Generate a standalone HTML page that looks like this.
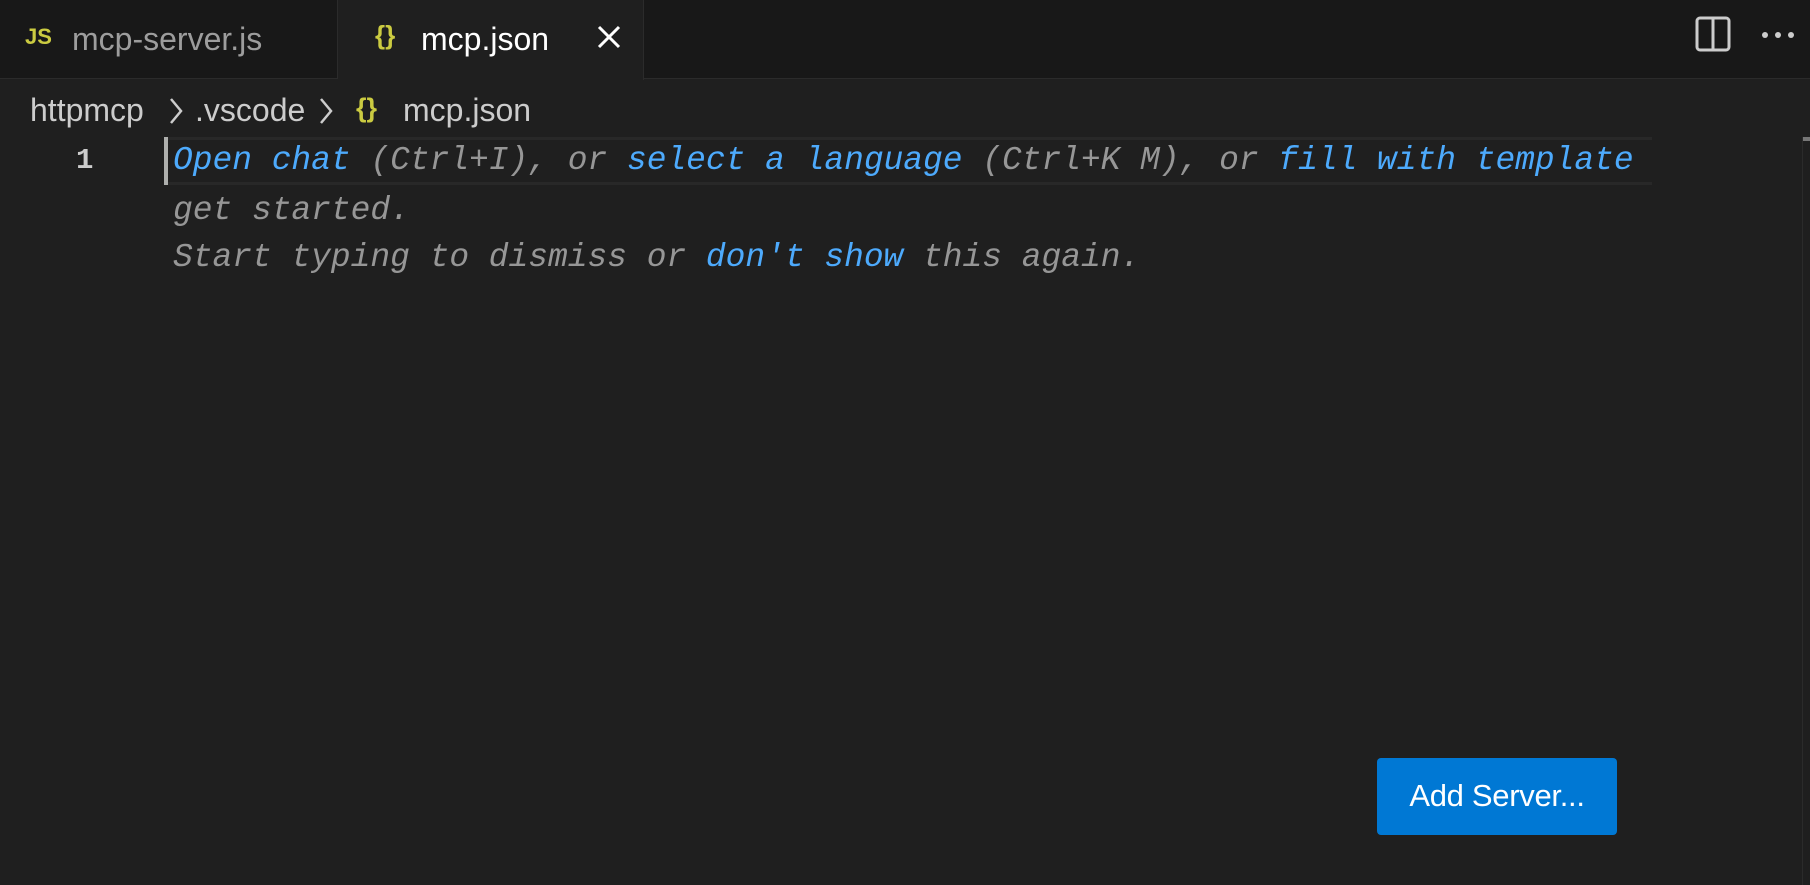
<!DOCTYPE html>
<html><head><meta charset="utf-8"><style>
*{margin:0;padding:0;box-sizing:border-box}
body{width:1810px;height:885px;background:#1f1f1f;overflow:hidden;font-family:"Liberation Sans",sans-serif;position:relative}
.tabbar{position:absolute;left:0;top:0;width:1810px;height:79px;background:#181818;border-bottom:1px solid #2b2b2b}
.tab{position:absolute;top:0;height:79px;font-size:32px;line-height:78px}
.crumb{position:absolute;top:88px;font-size:32px;color:#cccccc;line-height:44px;white-space:nowrap}
.code{position:absolute;left:173px;font-family:"Liberation Mono",monospace;font-style:italic;font-size:32.9px;color:#969696;white-space:pre;line-height:48px}
.b{color:#4daafc}
.hl{position:absolute;left:164px;top:137px;width:1488px;height:48px;border-top:3px solid #282828;border-bottom:3px solid #282828}
.btn{position:absolute;left:1377px;top:758px;width:240px;height:77px;background:#0078d4;border-radius:4px;color:#fff;font-size:31px;text-align:center;line-height:76px;letter-spacing:-0.3px}
</style></head><body>
<div class="tabbar">
 <div class="tab" style="left:0;width:338px;color:#9d9d9d;border-right:1px solid #2b2b2b"><span style="position:absolute;left:25px;top:-2px;font-size:22px;font-weight:bold;color:#cbcb41">JS</span><span style="position:absolute;left:72px">mcp-server.js</span></div>
 <div class="tab" style="left:338px;width:306px;height:80px;background:#1f1f1f;color:#fff;border-right:1px solid #2b2b2b"><span style="position:absolute;left:37px;font-size:26px;font-weight:bold;color:#cbcb41;top:-4px">{}</span><span style="position:absolute;left:83px">mcp.json</span>
 <svg style="position:absolute;left:259px;top:25px" width="24" height="24" viewBox="0 0 24 24"><path d="M2 2L22 22M22 2L2 22" stroke="#fff" stroke-width="3"/></svg></div>
 <svg style="position:absolute;left:1695px;top:16px" width="36" height="36" viewBox="0 0 36 36"><rect x="2" y="2" width="32" height="32" rx="3" fill="none" stroke="#ccc" stroke-width="3"/><path d="M18 2V34" stroke="#ccc" stroke-width="3"/></svg>
 <svg style="position:absolute;left:1760px;top:28px" width="38" height="14"><circle cx="5" cy="7" r="3" fill="#ccc"/><circle cx="18" cy="7" r="3" fill="#ccc"/><circle cx="31" cy="7" r="3" fill="#ccc"/></svg>
</div>
<div class="crumb" style="left:30px">httpmcp</div>
<svg style="position:absolute;left:168px;top:96px" width="16" height="30"><path d="M3 3L13 15L3 27" fill="none" stroke="#ccc" stroke-width="2.5"/></svg>
<div class="crumb" style="left:195px">.vscode</div>
<svg style="position:absolute;left:318px;top:96px" width="16" height="30"><path d="M3 3L13 15L3 27" fill="none" stroke="#ccc" stroke-width="2.5"/></svg>
<div class="crumb" style="left:356px;color:#cbcb41;font-weight:bold;font-size:27px;top:86px">{}</div>
<div class="crumb" style="left:403px">mcp.json</div>
<div class="hl"></div>
<div style="position:absolute;left:164px;top:137px;width:4px;height:48px;background:#aeafad"></div>
<div style="position:absolute;left:76px;top:137px;font-family:'Liberation Mono',monospace;font-size:29px;line-height:48px;color:#ccc;font-weight:bold">1</div>
<div class="code" style="top:137px"><span class="b">Open chat</span> (Ctrl+I), or <span class="b">select a language</span> (Ctrl+K M), or <span class="b">fill with template</span></div>
<div class="code" style="top:187px">get started.</div>
<div class="code" style="top:234px">Start typing to dismiss or <span class="b">don't show</span> this again.</div>
<div style="position:absolute;left:1802px;top:137px;width:8px;height:4px;background:#777"></div>
<div style="position:absolute;left:1802px;top:137px;width:1px;height:748px;background:#2b2b2b"></div>
<div class="btn">Add Server...</div>
</body></html>
